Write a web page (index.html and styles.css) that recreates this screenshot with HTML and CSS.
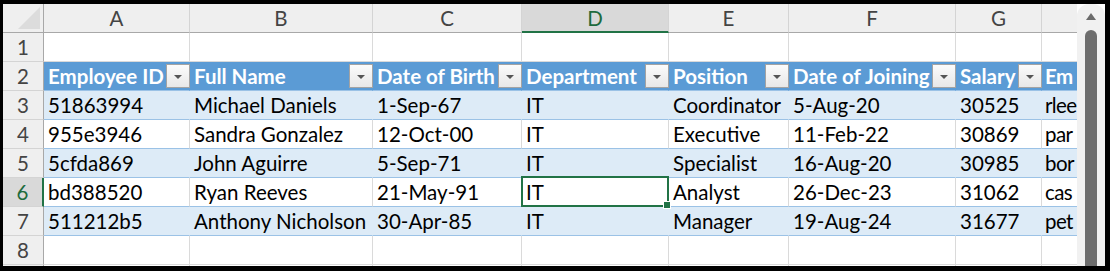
FILE: index.html
```html
<!DOCTYPE html>
<html>
<head>
<meta charset="utf-8">
<link rel="stylesheet" href="styles.css">
</head>
<body>
<div class="frame">
  <div class="sheet">
    <div class="grid">
      <div class="corner"><svg class="corner-tri" width="22" height="22" viewBox="0 0 22 22"><polygon points="22,0 22,22 0,22" fill="#dcdcdc"/></svg></div>
      <div class="ch">A</div><div class="ch">B</div><div class="ch">C</div><div class="ch sel">D</div><div class="ch">E</div><div class="ch">F</div><div class="ch">G</div><div class="ch last"></div>

      <div class="rh">1</div>
      <div class="c"></div><div class="c"></div><div class="c"></div><div class="c"></div><div class="c"></div><div class="c"></div><div class="c"></div><div class="c last"></div>

      <div class="rh">2</div>
      <div class="c th"><span>Employee ID</span><i class="fb"></i></div>
      <div class="c th"><span>Full Name</span><i class="fb"></i></div>
      <div class="c th"><span>Date of Birth</span><i class="fb"></i></div>
      <div class="c th"><span>Department</span><i class="fb"></i></div>
      <div class="c th"><span>Position</span><i class="fb"></i></div>
      <div class="c th"><span>Date of Joining</span><i class="fb"></i></div>
      <div class="c th"><span>Salary</span><i class="fb"></i></div>
      <div class="c th last"><span>Em</span></div>

      <div class="rh">3</div>
      <div class="c b">51863994</div><div class="c b">Michael Daniels</div><div class="c b">1-Sep-67</div><div class="c b">IT</div><div class="c b">Coordinator</div><div class="c b">5-Aug-20</div><div class="c b">30525</div><div class="c b last">rlee</div>

      <div class="rh">4</div>
      <div class="c w">955e3946</div><div class="c w">Sandra Gonzalez</div><div class="c w">12-Oct-00</div><div class="c w">IT</div><div class="c w">Executive</div><div class="c w">11-Feb-22</div><div class="c w">30869</div><div class="c w last">par</div>

      <div class="rh">5</div>
      <div class="c b">5cfda869</div><div class="c b">John Aguirre</div><div class="c b">5-Sep-71</div><div class="c b">IT</div><div class="c b">Specialist</div><div class="c b">16-Aug-20</div><div class="c b">30985</div><div class="c b last">bor</div>

      <div class="rh rsel">6</div>
      <div class="c w">bd388520</div><div class="c w">Ryan Reeves</div><div class="c w">21-May-91</div><div class="c w active">IT<span class="handle"></span></div><div class="c w">Analyst</div><div class="c w">26-Dec-23</div><div class="c w">31062</div><div class="c w last">cas</div>

      <div class="rh">7</div>
      <div class="c b">511212b5</div><div class="c b">Anthony Nicholson</div><div class="c b">30-Apr-85</div><div class="c b">IT</div><div class="c b">Manager</div><div class="c b">19-Aug-24</div><div class="c b">31677</div><div class="c b last">pet</div>

      <div class="rh">8</div>
      <div class="c"></div><div class="c"></div><div class="c"></div><div class="c"></div><div class="c"></div><div class="c"></div><div class="c"></div><div class="c last"></div>

      <div class="rh"></div>
      <div class="c"></div><div class="c"></div><div class="c"></div><div class="c"></div><div class="c"></div><div class="c"></div><div class="c"></div><div class="c last"></div>
    </div>
  </div>
  <div class="vscroll">
    <svg class="arrow" width="10" height="8" viewBox="0 0 10 8"><polygon points="5,0 10,7 0,7" fill="#6b6b6b"/></svg>
    <div class="thumb"></div>
  </div>
</div>
</body>
</html>
```

FILE: styles.css
```css
html, body {
  margin: 0;
  padding: 0;
  background: #000;
}
.frame {
  width: 1110px;
  height: 271px;
  box-sizing: border-box;
  border-style: solid;
  border-color: #000;
  border-width: 4px 5px 5px 3px;
  display: flex;
  background: #fff;
  overflow: hidden;
}
.sheet {
  width: 1074px;
  overflow: hidden;
  background: #fff;
}
.grid {
  display: grid;
  grid-template-columns: 41px 146px 183px 149px 147px 120px 167px 86px 35px;
  grid-auto-rows: 29px;
  font-family: Lato, "Liberation Sans", sans-serif;
  font-size: 20.5px;
  color: #000;
}
.grid > div {
  box-sizing: border-box;
  border-right: 1px solid #dadada;
  border-bottom: 1px solid #dadada;
  white-space: nowrap;
  overflow: hidden;
  display: flex;
  align-items: center;
}
.grid > .last {
  border-right: none;
}
.grid > .c.last {
  padding-left: 3px;
  letter-spacing: -0.6px;
}
.corner {
  background: #efefef;
  border-right-color: #a8a8a8 !important;
  border-bottom-color: #a8a8a8 !important;
  justify-content: flex-end;
  align-items: flex-end !important;
}
.corner-tri {
  margin: 0 3px 3px 0;
}
.grid > .ch {
  background: #efefef;
  justify-content: center;
  color: #444;
  border-right-color: #d4d4d4;
  border-bottom-color: #a8a8a8;
}
.grid > .ch.sel {
  background: #d9d9d9;
  color: #1e6b3d;
  border-bottom: 2px solid #217346;
}
.grid > .rh {
  background: #efefef;
  justify-content: center;
  color: #444;
  border-right-color: #a8a8a8;
  border-bottom-color: #d4d4d4;
}
.grid > .rh.rsel {
  background: #d9d9d9;
  color: #1e6b3d;
  border-right: 2px solid #217346;
}
.grid > .c {
  padding-left: 4px;
}
.grid > .th {
  background: #5b9bd5;
  color: #fff;
  font-weight: bold;
  border-right-color: #5b9bd5;
  border-bottom-color: #9bc2e6;
  justify-content: space-between;
  padding-right: 0;
  overflow: visible;
}
.grid > .th.last {
  overflow: hidden;
}
.grid > .b {
  background: #ddebf7;
  border-right-color: #ddebf7;
  border-bottom-color: #9bc2e6;
}
.grid > .w {
  border-bottom-color: #9bc2e6;
}
.fb {
  flex: none;
  width: 24px;
  height: 24px;
  box-sizing: border-box;
  border: 1px solid #a3a3a3;
  background: linear-gradient(#fbfbfb, #e8e8e8);
  margin-right: -1px;
  position: relative;
}
.fb::after {
  content: "";
  position: absolute;
  left: 7px;
  top: 10px;
  border-left: 4px solid transparent;
  border-right: 4px solid transparent;
  border-top: 4px solid #555;
}
.grid > .active {
  position: relative;
  overflow: visible;
}
.active::before {
  content: "";
  position: absolute;
  left: -1px;
  top: -2px;
  right: -1px;
  bottom: -1px;
  border: 2px solid #217346;
}
.handle {
  position: absolute;
  right: -3px;
  bottom: -3px;
  width: 6px;
  height: 6px;
  background: #217346;
  border: 1px solid #fff;
  box-sizing: content-box;
  z-index: 2;
}
.vscroll {
  flex: none;
  width: 28px;
  background: #f1f1f1;
  border-radius: 12px 12px 0 0;
  display: flex;
  flex-direction: column;
  align-items: center;
}
.arrow {
  margin-top: 9px;
  margin-left: -1px;
}
.thumb {
  margin-top: 9px;
  margin-left: -1px;
  width: 12px;
  flex: 1;
  background: #6d6d6d;
  border-radius: 6px 6px 0 0;
}
```
